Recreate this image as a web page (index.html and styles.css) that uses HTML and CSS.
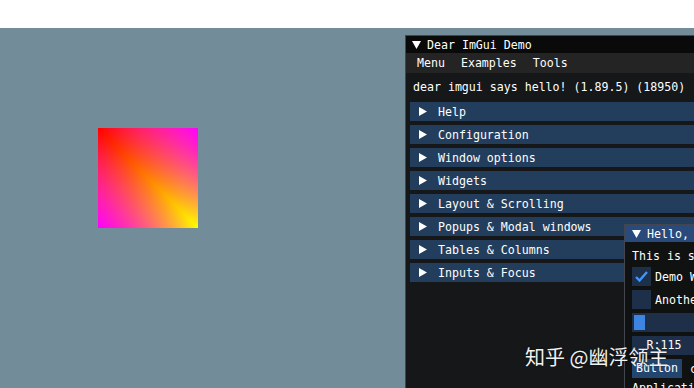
FILE: index.html
```html
<!DOCTYPE html>
<html lang="en">
<head>
    <meta charset="UTF-8">
    <meta name="viewport" content="width=device-width, initial-scale=1.0">
    <title>Dear ImGui Demo</title>
    <link rel="stylesheet" href="styles.css">
</head>
<body>
    <div class="topband"></div>
    <div class="scene">
        <div class="quad"></div>

        <div class="win demo">
            <div class="title">
                <svg class="tri" width="9" height="8" viewBox="0 0 9 8"><polygon points="0,0 9,0 4.5,8" fill="#fff"/></svg>
                <span>Dear ImGui Demo</span>
            </div>
            <div class="menubar">
                <span>Menu</span>
                <span>Examples</span>
                <span>Tools</span>
            </div>
            <div class="content">
                <div class="line">dear imgui says hello! (1.89.5) (18950)</div>
                <div class="headers">
                    <div class="header"><svg class="arrow" width="8" height="9" viewBox="0 0 8 9"><polygon points="0,0 8,4.5 0,9" fill="#fff"/></svg>Help</div>
                    <div class="header"><svg class="arrow" width="8" height="9" viewBox="0 0 8 9"><polygon points="0,0 8,4.5 0,9" fill="#fff"/></svg>Configuration</div>
                    <div class="header"><svg class="arrow" width="8" height="9" viewBox="0 0 8 9"><polygon points="0,0 8,4.5 0,9" fill="#fff"/></svg>Window options</div>
                    <div class="header"><svg class="arrow" width="8" height="9" viewBox="0 0 8 9"><polygon points="0,0 8,4.5 0,9" fill="#fff"/></svg>Widgets</div>
                    <div class="header"><svg class="arrow" width="8" height="9" viewBox="0 0 8 9"><polygon points="0,0 8,4.5 0,9" fill="#fff"/></svg>Layout &amp; Scrolling</div>
                    <div class="header"><svg class="arrow" width="8" height="9" viewBox="0 0 8 9"><polygon points="0,0 8,4.5 0,9" fill="#fff"/></svg>Popups &amp; Modal windows</div>
                    <div class="header"><svg class="arrow" width="8" height="9" viewBox="0 0 8 9"><polygon points="0,0 8,4.5 0,9" fill="#fff"/></svg>Tables &amp; Columns</div>
                    <div class="header"><svg class="arrow" width="8" height="9" viewBox="0 0 8 9"><polygon points="0,0 8,4.5 0,9" fill="#fff"/></svg>Inputs &amp; Focus</div>
                </div>
            </div>
        </div>

        <div class="win hello">
            <div class="title active">
                <svg class="tri" width="9" height="8" viewBox="0 0 9 8"><polygon points="0,0 9,0 4.5,8" fill="#fff"/></svg>
                <span>Hello, world!</span>
            </div>
            <div class="content">
                <div class="line">This is some useful text.</div>
                <div class="rows">
                    <div class="row">
                        <div class="check">
                            <svg width="19" height="19" viewBox="0 0 19 19"><polyline points="4,10 7.5,13.5 15,5" fill="none" stroke="#4296fa" stroke-width="2.4"/></svg>
                        </div>
                        <span>Demo Window</span>
                    </div>
                    <div class="row">
                        <div class="check"></div>
                        <span>Another Window</span>
                    </div>
                    <div class="row">
                        <div class="frame slider"><div class="grab"></div></div>
                        <span>float</span>
                    </div>
                    <div class="row">
                        <div class="frame color">R:115</div>
                        <div class="frame color">G:140</div>
                    </div>
                    <div class="row">
                        <div class="button">Button</div>
                        <span class="counter">counter = 0</span>
                    </div>
                    <div class="line">Application average 16.667 ms/frame (60.0 FPS)</div>
                </div>
            </div>
        </div>

        <div class="watermark">知乎 @幽浮领主</div>
    </div>
</body>
</html>
```

FILE: styles.css
```css
body {
    margin: 0;
    width: 694px;
    height: 388px;
    overflow: hidden;
    background-color: #fff;
    font-family: "DejaVu Sans Mono", "Liberation Mono", monospace;
    font-size: 11.6px;
    color: #fff;
}
.topband {
    height: 28px;
    background-color: #fff;
}
.scene {
    position: relative;
    height: 360px;
    background-color: #738c99;
    overflow: hidden;
}
.quad {
    position: absolute;
    left: 98px;
    top: 100px;
    width: 100px;
    height: 100px;
    background:
        linear-gradient(45deg, #ff00ff 0%, rgba(255,0,255,0) 50%, #ff00ff 100%),
        linear-gradient(135deg, #ff0000 0%, #ff8000 50%, #ffff00 100%);
}
.win {
    position: absolute;
    border: 1px solid #44464f;
    white-space: nowrap;
}
.demo {
    left: 405px;
    top: 7px;
    width: 420px;
    height: 420px;
    background-color: #151718;
}
.hello {
    left: 624px;
    top: 196px;
    width: 300px;
    height: 300px;
    background-color: #101111;
}
.title {
    display: flex;
    align-items: center;
    height: 17px;
    padding-left: 6px;
    background-color: #0a0a0a;
}
.title.active {
    background-color: #294a7a;
    padding-left: 7px;
}
.tri {
    margin-right: 6px;
    flex-shrink: 0;
}
.menubar {
    display: flex;
    align-items: center;
    gap: 16px;
    height: 20px;
    padding-left: 11px;
    background-color: #242424;
}
.content {
    padding: 8px 0 0 7px;
}
.line {
    height: 13px;
    line-height: 13px;
}
.demo .line {
    margin-bottom: 8px;
}
.headers {
    display: flex;
    flex-direction: column;
    gap: 4px;
    margin-left: -3px;
}
.header {
    display: flex;
    align-items: center;
    height: 19px;
    padding-left: 9px;
    background-color: #233e5d;
}
.arrow {
    margin-right: 11px;
    flex-shrink: 0;
}
.rows {
    display: flex;
    flex-direction: column;
    gap: 4px;
    margin-top: 4px;
}
.row {
    display: flex;
    align-items: center;
    gap: 4px;
    height: 19px;
}
.check {
    width: 19px;
    height: 19px;
    background-color: #1e2f49;
}
.check svg {
    display: block;
}
.frame {
    height: 19px;
    background-color: #1e2f49;
}
.slider {
    width: 200px;
    position: relative;
}
.grab {
    position: absolute;
    left: 2px;
    top: 2px;
    width: 11px;
    height: 15px;
    background-color: #3d85e0;
}
.color {
    width: 64px;
    line-height: 19px;
    text-align: center;
}
.button {
    height: 19px;
    line-height: 19px;
    padding: 0 4px;
    background-color: #24466e;
}
.counter {
    margin-left: 4px;
}
.watermark {
    position: absolute;
    left: 525px;
    top: 317px;
    font-family: "Noto Sans CJK SC", sans-serif;
    font-size: 20px;
    line-height: 24px;
    color: #f2f2f2;
    text-shadow: 0 0 2px rgba(0,0,0,0.5);
    white-space: nowrap;
}
```
